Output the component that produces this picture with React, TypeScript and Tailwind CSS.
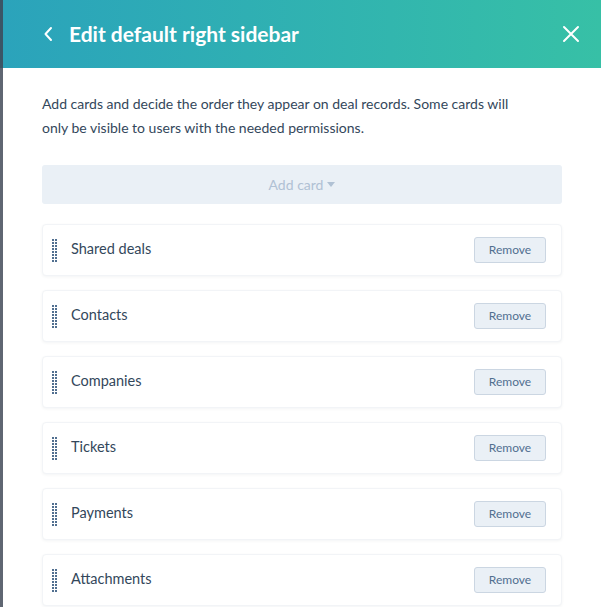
import React from "react";

const cards = ["Shared deals", "Contacts", "Companies", "Tickets", "Payments", "Attachments"];

function DragHandle() {
  return (
    <svg width="5" height="23" viewBox="0 0 5 23" className="shrink-0">
      {Array.from({ length: 8 }).map((_, i) => (
        <g key={i} fill="#516f90">
          <rect x="0" y={i * 3} width="2" height="2" />
          <rect x="3" y={i * 3} width="2" height="2" />
        </g>
      ))}
    </svg>
  );
}

export default function App() {
  const handleRemove = (name: string) => {
    console.log(`Remove card: ${name}`);
  };

  return (
    <div
      className="flex h-[607px] w-[601px] overflow-hidden bg-white"
      style={{ fontFamily: "Lato, 'Open Sans', sans-serif" }}
    >
      <div className="flex w-[3px] shrink-0 flex-col">
        <div className="h-[68px] bg-[#3b5566]" />
        <div className="flex-1 bg-[#5f6672]" />
      </div>
      <div className="flex min-w-0 flex-1 flex-col">
        <header className="flex h-[68px] shrink-0 items-center justify-between bg-gradient-to-r from-[#2ba3bb] to-[#37c0a6] pl-[40px] pr-[21px] text-white">
          <div className="flex items-center gap-[16px]">
            <svg width="10" height="16" viewBox="0 0 10 16" fill="none">
              <path d="M8 2L2.5 8L8 14" stroke="white" strokeWidth="2" strokeLinecap="round" strokeLinejoin="round" />
            </svg>
            <h1 className="text-[21px] font-bold">Edit default right sidebar</h1>
          </div>
          <svg width="18" height="18" viewBox="0 0 18 18" fill="none">
            <path d="M2 2L16 16M16 2L2 16" stroke="white" strokeWidth="2" strokeLinecap="round" />
          </svg>
        </header>

        <main className="flex flex-col px-[39px] pt-[24px]">
          <p className="max-w-[478px] text-[14px] leading-[24px] text-[#33475b]">
            Add cards and decide the order they appear on deal records. Some cards will only be visible to users with the needed permissions.
          </p>

          <button className="mt-[25px] flex h-[39px] w-full items-center justify-center gap-[4px] rounded-[3px] bg-[#eaf0f6] text-[14px] text-[#b0c1d4]">
            Add card
            <svg width="8" height="5" viewBox="0 0 8 5">
              <path d="M0 0H8L4 5Z" fill="#b0c1d4" />
            </svg>
          </button>

          <ul className="mt-[20px] flex flex-col gap-[14px]">
            {cards.map((card) => (
              <li
                key={card}
                className="flex h-[52px] items-center rounded-[4px] border border-[#f2f4f7] bg-white pl-[9px] pr-[15px] shadow-[0_1px_3px_rgba(45,62,80,0.06)]"
              >
                <DragHandle />
                <span className="ml-[14px] flex-1 pb-[3px] text-[14.5px] text-[#33475b]">{card}</span>
                <button
                  className="h-[26px] w-[72px] rounded-[3px] border border-[#cbd6e2] bg-[#eaf0f6] text-[12px] text-[#516f90]"
                  onClick={() => handleRemove(card)}
                >
                  Remove
                </button>
              </li>
            ))}
          </ul>
        </main>
      </div>
    </div>
  );
}
